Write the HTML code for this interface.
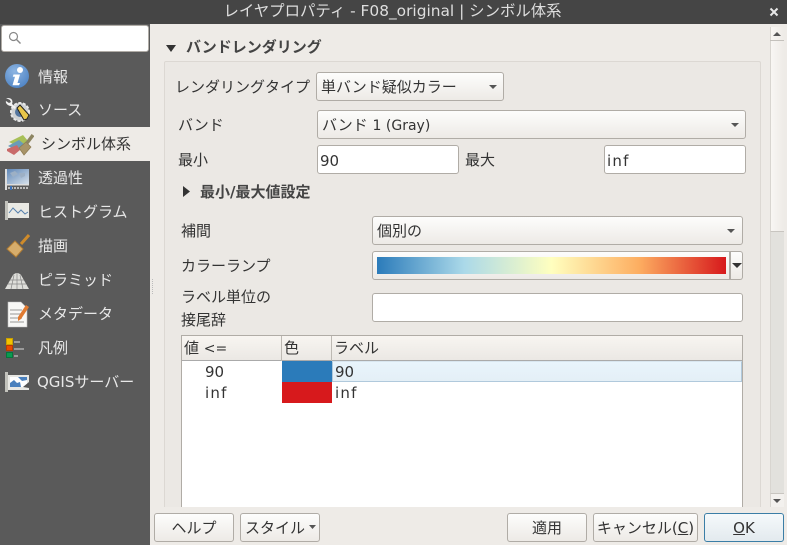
<!DOCTYPE html>
<html lang="ja"><head><meta charset="utf-8">
<style>
*{box-sizing:border-box}
html,body{margin:0;padding:0}
body{width:787px;height:545px;position:relative;overflow:hidden;background:#eeebe7;font-family:"DejaVu Sans","Noto Sans CJK JP",sans-serif;font-size:15px;color:#333}
.a{position:absolute;white-space:nowrap}
.t{position:absolute;white-space:nowrap;line-height:20px;margin-top:1px}
.side{color:#e8e8e8}
.combo,.btn{position:absolute;border:1px solid #b0aca6;border-radius:3px;background:linear-gradient(#fdfdfc,#edeae6)}
.input{position:absolute;border:1px solid #b0aca6;border-radius:3px;background:#fff}
.arr{position:absolute;width:0;height:0;border-left:4.5px solid transparent;border-right:4.5px solid transparent;border-top:4px solid #555}
.btn{text-align:center;line-height:28px;color:#333}
.ls{letter-spacing:1.2px}
.s{font-size:14px}
svg{position:absolute}
</style></head><body>
<div class="a" style="left:0;top:0;width:787px;height:24px;background:#454545"></div>
<div class="t" style="left:-1px;top:1px;width:787px;text-align:center;color:#dedede;font-size:15.4px;margin:0">レイヤプロパティ - F08_original | シンボル体系</div>
<svg style="left:769px;top:7px" width="10" height="10"><path d="M1.5 1.5L8.5 8.5M8.5 1.5L1.5 8.5" stroke="#e8e8e8" stroke-width="2"/></svg>

<div class="a" style="left:0;top:24px;width:150px;height:521px;background:#5a5a5a"></div>
<div class="input" style="left:1px;top:25px;width:148px;height:27px"></div>
<svg style="left:8px;top:31px" width="14" height="14"><circle cx="5.5" cy="5.5" r="4" fill="none" stroke="#888" stroke-width="1.2"/><path d="M8.5 8.5L12.5 12.5" stroke="#888" stroke-width="1.4"/></svg>
<div class="a" style="left:0;top:127px;width:150px;height:34px;background:#eeebe7"></div>

<svg style="left:4px;top:63px" width="26" height="26"><defs><radialGradient id="g" cx=".4" cy=".3" r=".8"><stop offset="0" stop-color="#8db5e2"/><stop offset="1" stop-color="#4a80c2"/></radialGradient></defs><circle cx="13" cy="13" r="12" fill="url(#g)"/><circle cx="16" cy="7" r="3" fill="#fff"/><path d="M9.5 11.5h6.5l-2.5 8.5h2.5l-1 2.2H8.5l2.5-8.5H8.8z" fill="#fff"/></svg>
<svg style="left:5px;top:97px" width="26" height="26"><circle cx="15" cy="15" r="9" fill="#cfd2d4" stroke="#e8e8e8" stroke-width="2" stroke-dasharray="3 1.5"/><circle cx="15" cy="15" r="5" fill="#5577a0"/><path d="M1 1c3 0 5 0 6 2 1 2 0 4 0 4l4 3-1.5 2L6 9C3 9 0 6 1 4l3 2 2-1-1-2z" fill="#f2f2f2"/><path d="M12 11l3-3 9 10-2 4-3 1z" fill="#e8c64a" stroke="#222" stroke-width="1"/></svg>
<svg style="left:6px;top:133px" width="28" height="24"><path d="M3 9L17 2l5 6-9 6z" fill="#a8c058"/><path d="M2 13L13 7l5 4-8 6z" fill="#6a9cb8"/><path d="M1 16l10-4 3 5-6 5-7-4z" fill="#c96a6a"/><path d="M13 15l7-6 5 5-7 8z" fill="#a89468" stroke="#8c7a52" stroke-width=".7"/><path d="M21 10l6-8" stroke="#8d8562" stroke-width="3.5"/></svg>
<svg style="left:4px;top:168px" width="26" height="23"><defs><linearGradient id="m" x1="0" x2="1" y1="0" y2="1"><stop offset="0" stop-color="#5a83b5"/><stop offset="1" stop-color="#d6e0ea"/></linearGradient></defs><rect x="1" y="1" width="24" height="15" fill="url(#m)"/><path d="M6 5l5-2 3 3-5 3zM15 5h6v3l-4 2z" fill="#9db0c5"/><rect x="1" y="16" width="24" height="1.5" fill="#ddd"/><path d="M4 20h21" stroke="#bbb" stroke-width="2" stroke-dasharray="2 1"/><rect x="1" y="1" width="2" height="21" fill="#ddd"/><rect x="6" y="18" width="2" height="4" fill="#3a6fb5"/></svg>
<svg style="left:4px;top:201px" width="26" height="21"><rect x="1" y="2" width="24" height="15" fill="#e9e9e4"/><rect x="1" y="0" width="3" height="19" fill="#c2c2bc"/><path d="M5 12l4-5 5 5 3-3 4 4 3-2" fill="none" stroke="#5680ad" stroke-width="1"/></svg>
<svg style="left:6px;top:233px" width="24" height="26"><path d="M1 16l8-8 8 8-7 8z" fill="#d6ad6c" stroke="#b07c33"/><path d="M15 11L23 2" stroke="#cf8b2a" stroke-width="3"/></svg>
<svg style="left:4px;top:269px" width="26" height="22"><path d="M1 20L9 6q4-4 8 0l8 14z" fill="#dededa"/><path d="M6 11h14M4 15h18M10 6l-3 14M16 6l3 14M13 4v16" stroke="#888" stroke-width=".7" fill="none"/></svg>
<svg style="left:7px;top:301px" width="24" height="27"><path d="M1 1h13l6 6v19H1z" fill="#f8f8f6" stroke="#bbb" stroke-width=".6"/><path d="M3 9h12M3 13h11M3 17h12M3 21h14" stroke="#aaa" stroke-width="1.2"/><path d="M11 16L19 4l3 2-8 12-3 2z" fill="#e07a30"/></svg>
<svg style="left:5px;top:336px" width="22" height="24"><rect x="1.5" y="2.5" width="6" height="6" fill="#f2c200" stroke="#c8a000"/><rect x="1.5" y="9.5" width="6" height="5" fill="#e84a00" stroke="#b83a00"/><rect x="1.5" y="16.5" width="6" height="5" fill="#0a9a50" stroke="#07753c"/><path d="M9 6h6M9 13h10M9 20h4" stroke="#9a9a9a" stroke-width="2"/></svg>
<svg style="left:4px;top:372px" width="26" height="22"><rect x="1" y="3" width="24" height="15" fill="#e8e8e4"/><rect x="1" y="0" width="3" height="20" fill="#c2c2bc"/><path d="M6 5h17v10H6z" fill="#fff"/><path d="M6 15V11l4-3 3 3 3-1 1 5zM14 5h9v3l-5 1z" fill="#4a80bd"/><path d="M19 15l6-5v6z" fill="#555"/></svg>

<div class="t side" style="left:38px;top:66px">情報</div>
<div class="t side" style="left:38px;top:99px">ソース</div>
<div class="t" style="left:41px;top:133px">シンボル体系</div>
<div class="t side" style="left:38px;top:167px">透過性</div>
<div class="t side" style="left:38px;top:201px">ヒストグラム</div>
<div class="t side" style="left:38px;top:235px">描画</div>
<div class="t side" style="left:38px;top:269px">ピラミッド</div>
<div class="t side" style="left:38px;top:303px">メタデータ</div>
<div class="t side" style="left:38px;top:337px">凡例</div>
<div class="t side" style="left:37px;top:371px">QGISサーバー</div>

<div class="a" style="left:152px;top:279px;width:1px;height:15px;border-left:1px dotted #bbb"></div>

<svg style="left:166px;top:45px" width="10" height="7"><path d="M0 0h10L5 7z" fill="#333"/></svg>
<div class="t" style="left:186px;top:37px;font-weight:bold;color:#444;margin:0">バンドレンダリング</div>
<div class="a" style="left:164px;top:61px;width:597px;height:446px;background:#ebe8e4;border:1px solid #dcd8d3;border-bottom:0;border-radius:2px 2px 0 0"></div>

<div class="t" style="left:175px;top:76px">レンダリングタイプ</div>
<div class="combo" style="left:316px;top:72px;width:188px;height:29px"></div>
<div class="t" style="left:321px;top:76px">単バンド疑似カラー</div>
<div class="arr" style="left:489px;top:85px"></div>

<div class="t" style="left:178px;top:114px">バンド</div>
<div class="combo" style="left:317px;top:110px;width:429px;height:29px"></div>
<div class="t" style="left:322px;top:114px">バンド <span class="s">1 (Gray)</span></div>
<div class="arr" style="left:731px;top:123px"></div>

<div class="t" style="left:178px;top:149px">最小</div>
<div class="input" style="left:317px;top:145px;width:142px;height:29px"></div>
<div class="t" style="left:320px;top:150px">90</div>
<div class="t" style="left:465px;top:149px">最大</div>
<div class="input" style="left:604px;top:145px;width:142px;height:29px"></div>
<div class="t ls" style="left:607px;top:150px">inf</div>

<svg style="left:183px;top:186px" width="8" height="11"><path d="M0 0L7 5.5L0 11z" fill="#333"/></svg>
<div class="t" style="left:200px;top:182px;font-weight:bold;color:#444;margin:0">最小/最大値設定</div>

<div class="t" style="left:181px;top:220px">補間</div>
<div class="combo" style="left:372px;top:216px;width:371px;height:29px"></div>
<div class="t" style="left:377px;top:220px">個別の</div>
<div class="arr" style="left:727px;top:229px"></div>

<div class="t" style="left:181px;top:255px">カラーランプ</div>
<div class="combo" style="left:372px;top:251px;width:359px;height:29px;border-right:2px solid #b0aca6;border-radius:3px 0 0 3px"></div>
<div class="a" style="left:377px;top:257px;width:349px;height:17px;background:linear-gradient(90deg,#2b7bba 0%,#abd9e9 25%,#ffffbf 50%,#fdae61 75%,#d7191c 100%)"></div>
<div class="combo" style="left:731px;top:251px;width:12px;height:29px;border-left:0;border-radius:0 3px 3px 0"></div>
<div class="arr" style="left:732px;top:263px;border-top-color:#333;border-left-width:5px;border-right-width:5px;border-top-width:5px"></div>

<div class="t" style="left:181px;top:286px">ラベル単位の</div>
<div class="t" style="left:181px;top:309px">接尾辞</div>
<div class="input" style="left:372px;top:293px;width:371px;height:29px"></div>

<div class="a" style="left:181px;top:335px;width:562px;height:172px;background:#fff;border:1px solid #b0aca6;border-bottom:0"></div>
<div class="a" style="left:182px;top:336px;width:560px;height:25px;background:linear-gradient(#f8f5f1,#ebe8e4);border-bottom:1px solid #aaa"></div>
<div class="a" style="left:281px;top:336px;width:1px;height:25px;background:#bdb9b3"></div>
<div class="a" style="left:331px;top:336px;width:1px;height:25px;background:#bdb9b3"></div>
<div class="t" style="left:184px;top:337px">値 <span class="s">&lt;=</span></div>
<div class="t" style="left:284px;top:337px">色</div>
<div class="t" style="left:334px;top:337px">ラベル</div>
<div class="a" style="left:282px;top:361px;width:50px;height:21px;background:#2b7bba"></div>
<div class="a" style="left:282px;top:382px;width:50px;height:21px;background:#d7191c"></div>
<div class="a" style="left:332px;top:361px;width:410px;height:21px;background:linear-gradient(#e8f4fc,#e4eff6);border:1px solid #b0c9dc;border-top-color:#d8e6f0"></div>
<div class="t" style="left:205px;top:361px">90</div>
<div class="t ls" style="left:205px;top:382px">inf</div>
<div class="t" style="left:335px;top:361px">90</div>
<div class="t ls" style="left:335px;top:382px">inf</div>

<div class="a" style="left:770px;top:27px;width:14px;height:480px;background:#e2e1dd;border-left:1px solid #d8d5d0"></div>
<div class="a" style="left:770px;top:27px;width:14px;height:205px;background:linear-gradient(90deg,#f8f6f3,#eeebe7);border-bottom:1px solid #c8c5c0;border-left:1px solid #d8d5d0"></div>
<div class="a" style="left:770px;top:40px;width:14px;height:1px;background:#c4c1bc"></div>
<svg style="left:772px;top:31px" width="10" height="6"><path d="M1 5h8L5 1z" fill="#555"/></svg>
<div class="a" style="left:770px;top:493px;width:14px;height:14px;background:#f3f1ee;border-top:1px solid #c8c5c0;border-left:1px solid #d8d5d0"></div>
<svg style="left:772px;top:498px" width="10" height="6"><path d="M1 1h8L5 5z" fill="#555"/></svg>

<div class="btn" style="left:154px;top:513px;width:80px;height:29px">ヘルプ</div>
<div class="btn" style="left:240px;top:513px;width:80px;height:29px;text-align:left;padding-left:4px">スタイル</div>
<svg style="left:309px;top:525px" width="7" height="4"><path d="M0 0h7L3.5 4z" fill="#555"/></svg>
<div class="btn" style="left:507px;top:513px;width:80px;height:29px">適用</div>
<div class="btn" style="left:593px;top:513px;width:105px;height:29px;padding:0;white-space:nowrap">キャンセル(<u>C</u>)</div>
<div class="btn" style="left:704px;top:513px;width:80px;height:29px;border-color:#3b7ea6;background:linear-gradient(#f5f9fb,#e3eaee)"><u>O</u>K</div>
</body></html>
